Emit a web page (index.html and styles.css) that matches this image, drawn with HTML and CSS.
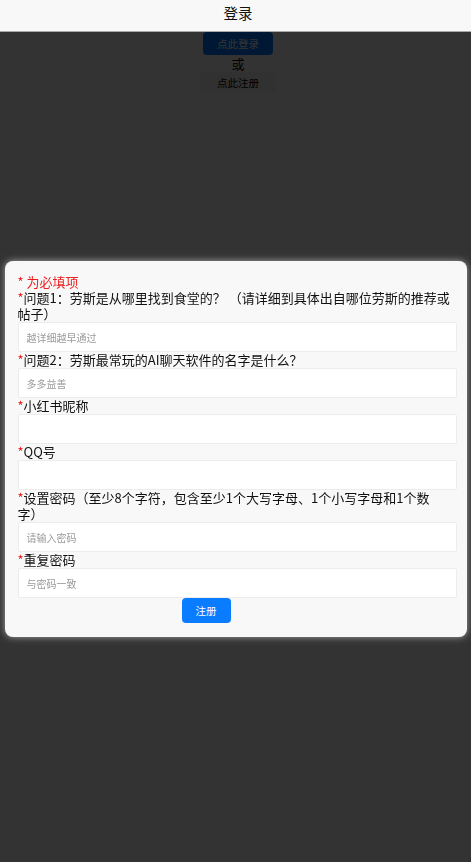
FILE: index.html
```html
<!DOCTYPE html>
<html lang="zh-CN">
<head>
<meta charset="utf-8">
<title>登录</title>
<link rel="stylesheet" href="styles.css">
</head>
<body>
<header class="topbar"><h1 class="topbar-title">登录</h1></header>
<main class="page">
  <button class="btn-login" type="button">点此登录</button>
  <div class="or">或</div>
  <button class="btn-register-link" type="button">点此注册</button>
</main>
<div class="backdrop">
  <form class="modal">
    <div class="note">* 为必填项</div>
    <div class="field">
      <label class="label"><span class="req">*</span>问题1：劳斯是从哪里找到食堂的？ （请详细到具体出自哪位劳斯的推荐或帖子）</label>
      <input class="input" type="text" placeholder="越详细越早通过">
    </div>
    <div class="field">
      <label class="label"><span class="req">*</span>问题2：劳斯最常玩的AI聊天软件的名字是什么？</label>
      <input class="input" type="text" placeholder="多多益善">
    </div>
    <div class="field">
      <label class="label"><span class="req">*</span>小红书昵称</label>
      <input class="input" type="text">
    </div>
    <div class="field">
      <label class="label"><span class="req">*</span>QQ号</label>
      <input class="input" type="text">
    </div>
    <div class="field">
      <label class="label label-narrow"><span class="req">*</span>设置密码（至少8个字符，包含至少1个大写字母、1个小写字母和1个数字）</label>
      <input class="input" type="password" placeholder="请输入密码">
    </div>
    <div class="field">
      <label class="label"><span class="req">*</span>重复密码</label>
      <input class="input" type="password" placeholder="与密码一致">
    </div>
    <div class="actions"><button class="btn-submit" type="button">注册</button></div>
  </form>
</div>
</body>
</html>
```

FILE: styles.css
```css
* { box-sizing: border-box; }
html, body { margin: 0; padding: 0; }
body {
  background: #ffffff;
  font-family: "Noto Sans CJK SC", "Noto Sans", sans-serif;
  color: #111;
  width: 471px;
  height: 862px;
  overflow: hidden;
}
.topbar {
  position: relative;
  z-index: 3;
  height: 32px;
  background: #f8f8f8;
  border-bottom: 1px solid #a8a8a8;
  text-align: center;
}
.topbar-title {
  margin: 0;
  padding-left: 5px;
  font-size: 14.5px;
  font-weight: normal;
  line-height: 26px;
  color: #111;
}
.page {
  display: flex;
  flex-direction: column;
  align-items: center;
  padding-left: 5px;
}
.btn-login {
  width: 70px;
  height: 23px;
  border: none;
  border-radius: 4px;
  background: #007bff;
  color: #fff;
  font-family: inherit;
  font-size: 10.5px;
  padding: 0;
}
.or {
  font-size: 13px;
  line-height: 17px;
  color: #000;
}
.btn-register-link {
  width: 76px;
  height: 20px;
  border: none;
  border-radius: 3px;
  background: #f2f2f2;
  color: #000;
  font-family: inherit;
  font-size: 10.5px;
  padding: 0;
}
.backdrop {
  position: fixed;
  z-index: 2;
  top: 32px;
  left: 0;
  right: 0;
  bottom: 0;
  background: rgba(0, 0, 0, 0.8);
  display: flex;
  justify-content: center;
  align-items: flex-start;
  padding-top: 229px;
}
.modal {
  width: 462px;
  background: #f8f8f8;
  border-radius: 8px;
  box-shadow: 0 0 7px rgba(255, 255, 255, 0.55);
  padding: 13px 10px 14px 13px;
  display: flex;
  flex-direction: column;
}
.note {
  color: #ee1c1c;
  font-size: 13px;
  line-height: 16px;
}
.field { display: flex; flex-direction: column; }
.label {
  font-size: 13px;
  line-height: 16px;
  color: #111;
}
.label-narrow { max-width: 425px; }
.req { color: #ee1c1c; }
.input {
  display: block;
  width: 100%;
  height: 30px;
  margin: 0;
  border: 1px solid #ececec;
  border-radius: 2px;
  background: #ffffff;
  padding: 0 8px;
  font-family: inherit;
  font-size: 10px;
  color: #333;
  outline: none;
}
.input::placeholder { color: #9a9a9a; }
.actions { display: flex; padding-left: 164px; }
.btn-submit {
  width: 49px;
  height: 25px;
  border: none;
  border-radius: 4px;
  background: #0a7cff;
  color: #fff;
  font-family: inherit;
  font-size: 10.5px;
  padding: 0;
}
```
